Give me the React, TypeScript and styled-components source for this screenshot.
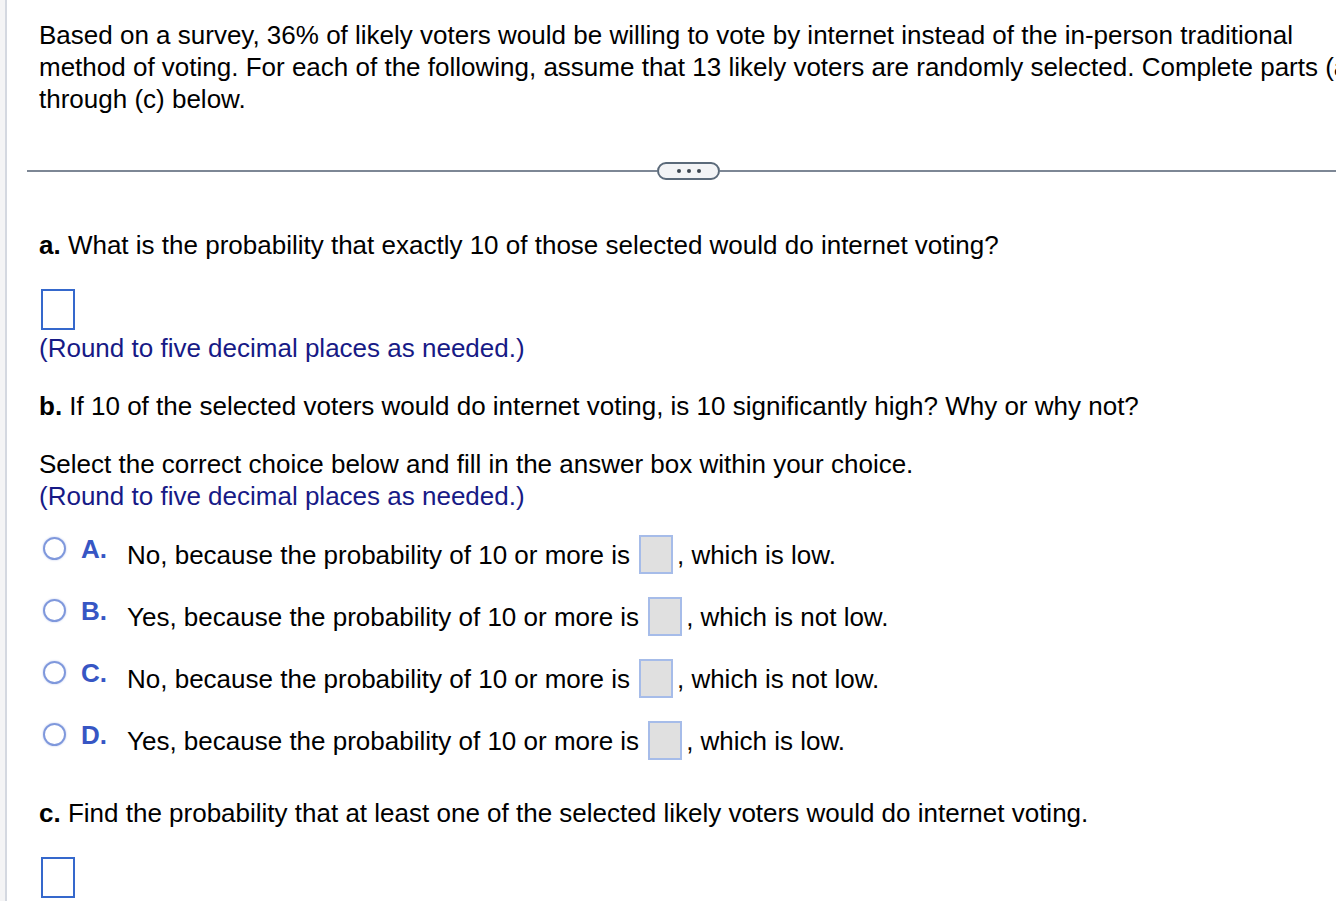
import styled, { createGlobalStyle } from 'styled-components';

const GlobalStyle = createGlobalStyle`
    html, body {
        margin: 0;
        padding: 0;
        background: #ffffff;
        overflow: hidden;
    }
    body {
        font-family: "Liberation Sans", Arial, sans-serif;
        color: #000000;
    }
`;

const Page = styled.div`
    display: flex;
    min-height: 901px;
    width: 1336px;
    overflow: hidden;
`;

const Rail = styled.div`
    flex: 0 0 5px;
    background: #f4f4f5;
    border-right: 2px solid #d4d8e0;
`;

const Content = styled.div`
    flex: 0 0 auto;
    width: 1360px;
    padding: 19px 0 0 32px;
    font-size: 26px;
    line-height: 32px;
`;

const Intro = styled.p`
    margin: 0;
    width: 1322px;
`;

const Divider = styled.div`
    display: flex;
    align-items: center;
    margin: 47px 0 0 -12px;
    width: 1340px;
    height: 18px;
`;

const Line = styled.div<{ grow?: boolean }>`
    height: 2px;
    background: #7d8795;
    ${p => (p.grow ? 'flex: 1;' : 'flex: 0 0 630px;')}
`;

const MoreButton = styled.div`
    display: flex;
    align-items: center;
    justify-content: center;
    gap: 6px;
    width: 63px;
    height: 18px;
    box-sizing: border-box;
    border: 2px solid #5b6a7a;
    border-radius: 9px;
    background: #f3f4f6;
`;

const Dot = styled.span`
    width: 4px;
    height: 4px;
    border-radius: 50%;
    background: #3d4650;
`;

const Question = styled.p<{ top: number }>`
    margin: ${p => p.top}px 0 0;
`;

const Bold = styled.b`
    font-weight: bold;
`;

const Hint = styled.p<{ top?: number }>`
    margin: ${p => p.top ?? 0}px 0 0;
    color: #171a86;
`;

const AnswerBox = styled.div<{ top: number }>`
    width: 34px;
    height: 41px;
    box-sizing: border-box;
    margin: ${p => p.top}px 0 0 2px;
    border: 2px solid #3568cc;
    background: #ffffff;
`;

const Options = styled.div`
    display: flex;
    flex-direction: column;
    gap: 23px;
    margin-top: 23px;
`;

const Option = styled.div`
    display: flex;
    align-items: center;
    height: 39px;
`;

const Radio = styled.span`
    flex: 0 0 auto;
    width: 23px;
    height: 23px;
    box-sizing: border-box;
    margin: 0 0 12px 4px;
    border-radius: 50%;
    border: 2px solid #7f98dc;
    box-shadow: 0 0 2px rgba(90, 120, 210, 0.45);
`;

const Letter = styled.span`
    flex: 0 0 46px;
    margin: 0 0 12px 15px;
    font-weight: bold;
    color: #3756c4;
`;

const SmallBox = styled.span`
    display: inline-block;
    width: 34px;
    height: 39px;
    box-sizing: border-box;
    margin: 0 4px 0 9px;
    border: 2px solid #a6bce9;
    background: #e0e0e0;
`;

const options = [
    { letter: 'A.', lead: 'No, because the probability of 10 or more is', tail: ', which is low.' },
    { letter: 'B.', lead: 'Yes, because the probability of 10 or more is', tail: ', which is not low.' },
    { letter: 'C.', lead: 'No, because the probability of 10 or more is', tail: ', which is not low.' },
    { letter: 'D.', lead: 'Yes, because the probability of 10 or more is', tail: ', which is low.' },
];

export default function App() {
    return (
        <>
            <GlobalStyle />
            <Page>
                <Rail />
                <Content>
                    <Intro>
                        Based on a survey, 36% of likely voters would be willing to vote by internet instead of the
                        in-person traditional method of voting. For each of the following, assume that 13 likely
                        voters are randomly selected. Complete parts (a) through (c) below.
                    </Intro>

                    <Divider>
                        <Line />
                        <MoreButton>
                            <Dot />
                            <Dot />
                            <Dot />
                        </MoreButton>
                        <Line grow />
                    </Divider>

                    <Question top={49}>
                        <Bold>a.</Bold> What is the probability that exactly 10 of those selected would do internet voting?
                    </Question>
                    <AnswerBox top={28} />
                    <Hint top={2}>(Round to five decimal places as needed.)</Hint>

                    <Question top={26}>
                        <Bold>b.</Bold> If 10 of the selected voters would do internet voting, is 10 significantly high? Why or why not?
                    </Question>
                    <Question top={26}>Select the correct choice below and fill in the answer box within your choice.</Question>
                    <Hint>(Round to five decimal places as needed.)</Hint>

                    <Options>
                        {options.map(o => (
                            <Option key={o.letter}>
                                <Radio />
                                <Letter>{o.letter}</Letter>
                                <span>{o.lead}</span>
                                <SmallBox />
                                <span>{o.tail}</span>
                            </Option>
                        ))}
                    </Options>

                    <Question top={37}>
                        <Bold>c.</Bold> Find the probability that at least one of the selected likely voters would do internet voting.
                    </Question>
                    <AnswerBox top={28} />
                </Content>
            </Page>
        </>
    );
}
